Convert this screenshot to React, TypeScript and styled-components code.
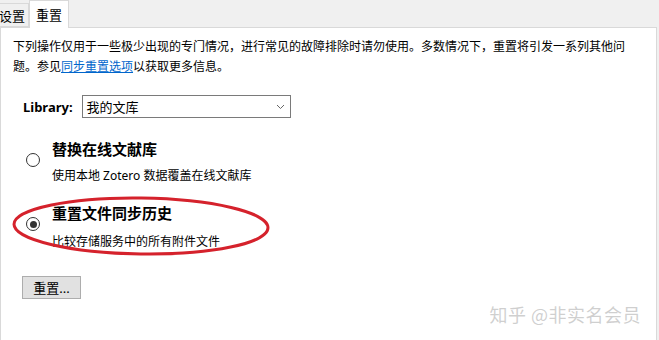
import React from 'react';
import styled, { createGlobalStyle } from 'styled-components';

const GlobalStyle = createGlobalStyle`
  html, body {
    margin: 0;
    padding: 0;
    background: #f0f0f0;
  }
  body {
    font-family: "Noto Sans", "Noto Sans CJK SC", sans-serif;
    color: #000;
  }
`;

const Window = styled.div`
  width: 659px;
  height: 340px;
  background: #f0f0f0;
  display: flex;
  flex-direction: column;
  overflow: hidden;
  position: relative;
`;

const TabBar = styled.div`
  height: 27px;
  display: flex;
  align-items: flex-end;
  box-sizing: border-box;
  padding-right: 3px;
`;

const Tab = styled.div<{ $active?: boolean }>`
  height: ${p => (p.$active ? '28px' : '24px')};
  margin-bottom: ${p => (p.$active ? '-1px' : '0')};
  box-sizing: border-box;
  padding: 0 ${p => (p.$active ? '6px' : '3px')};
  background: ${p => (p.$active ? '#fff' : '#f0f0f0')};
  border: 1px solid #d9d9d9;
  border-bottom: ${p => (p.$active ? 'none' : '1px solid #d9d9d9')};
  border-left: ${p => (p.$active ? '1px solid #d9d9d9' : 'none')};
  font-size: 13px;
  display: flex;
  align-items: center;
  position: relative;
  z-index: 1;
`;

const Panel = styled.div`
  flex: 1;
  margin-right: 2px;
  background: #fff;
  border: 1px solid #d9d9d9;
  border-bottom: none;
  padding: 9px 12px 0 12px;
  position: relative;
`;

const Intro = styled.p`
  margin: 0;
  font-size: 12px;
  line-height: 20px;
  width: 616px;
`;

const Link = styled.a`
  color: #0066cc;
  text-decoration: underline;
`;

const LibraryRow = styled.div`
  display: flex;
  align-items: center;
  gap: 9px;
  margin: 18px 0 0 10px;
`;

const Label = styled.span`
  font-size: 13px;
  font-weight: bold;
  font-family: "Noto Sans", "Noto Sans CJK SC", sans-serif;
`;

const SelectBox = styled.div`
  width: 209px;
  height: 23px;
  box-sizing: border-box;
  border: 1px solid #7a7a7a;
  display: flex;
  align-items: center;
  justify-content: space-between;
  padding: 0 5px 0 4px;
  font-size: 13px;
  background: #fff;
`;

const Options = styled.div`
  display: flex;
  flex-direction: column;
  gap: 19px;
  margin: 21px 0 0 13px;
`;

const Option = styled.div`
  display: flex;
  align-items: flex-start;
  gap: 12px;
`;

const Radio = styled.span<{ $checked?: boolean }>`
  width: 14px;
  height: 14px;
  flex: none;
  box-sizing: border-box;
  border: 1px solid #333;
  border-radius: 50%;
  margin-top: 14px;
  display: flex;
  align-items: center;
  justify-content: center;
  &::after {
    content: '';
    width: 7px;
    height: 7px;
    border-radius: 50%;
    background: #333;
    display: ${p => (p.$checked ? 'block' : 'none')};
  }
`;

const OptionText = styled.div`
  display: flex;
  flex-direction: column;
`;

const OptionTitle = styled.div`
  font-size: 15px;
  font-weight: bold;
  line-height: 20px;
`;

const OptionDesc = styled.div<{ $gap: number }>`
  font-size: 12px;
  line-height: 16px;
  margin-top: ${p => p.$gap}px;
`;

const Button = styled.button`
  margin: 26px 0 0 9px;
  width: 59px;
  height: 23px;
  border: 1px solid #adadad;
  background: #e1e1e1;
  font-family: "Noto Sans", "Noto Sans CJK SC", sans-serif;
  font-size: 13px;
  padding: 0;
  display: flex;
  align-items: center;
  justify-content: center;
  color: #000;
`;

const Highlight = styled.svg`
  position: absolute;
  left: 0;
  top: 0;
  pointer-events: none;
`;

const Watermark = styled.div`
  position: absolute;
  right: 18px;
  bottom: 13px;
  font-size: 18px;
  color: rgba(160, 160, 160, 0.5);
  letter-spacing: 0.5px;
  font-family: "Noto Sans CJK SC", sans-serif;
`;

const App: React.FC = () => {
  return (
    <>
      <GlobalStyle />
      <Window>
        <TabBar>
          <Tab style={{ marginLeft: -4 }}>设置</Tab>
          <Tab $active>重置</Tab>
        </TabBar>
        <Panel>
          <Intro>
            下列操作仅用于一些极少出现的专门情况，进行常见的故障排除时请勿使用。多数情况下，重置将引发一系列其他问题。参见<Link href="#">同步重置选项</Link>以获取更多信息。
          </Intro>
          <LibraryRow>
            <Label>Library:</Label>
            <SelectBox>
              <span>我的文库</span>
              <svg width="9" height="6" viewBox="0 0 9 6">
                <path d="M1 1 L4.5 4.5 L8 1" fill="none" stroke="#666" strokeWidth="1" />
              </svg>
            </SelectBox>
          </LibraryRow>
          <Options>
            <Option>
              <Radio />
              <OptionText>
                <OptionTitle>替换在线文献库</OptionTitle>
                <OptionDesc $gap={9}>使用本地 Zotero 数据覆盖在线文献库</OptionDesc>
              </OptionText>
            </Option>
            <Option>
              <Radio $checked />
              <OptionText>
                <OptionTitle>重置文件同步历史</OptionTitle>
                <OptionDesc $gap={11}>比较存储服务中的所有附件文件</OptionDesc>
              </OptionText>
            </Option>
          </Options>
          <Button>重置...</Button>
        </Panel>
        <Highlight width="659" height="340">
          <ellipse cx="141" cy="226" rx="127" ry="28" fill="none" stroke="#d5222c" strokeWidth="3" transform="rotate(0.8 141 226)" />
        </Highlight>
        <Watermark>知乎 @非实名会员</Watermark>
      </Window>
    </>
  );
};

export default App;
